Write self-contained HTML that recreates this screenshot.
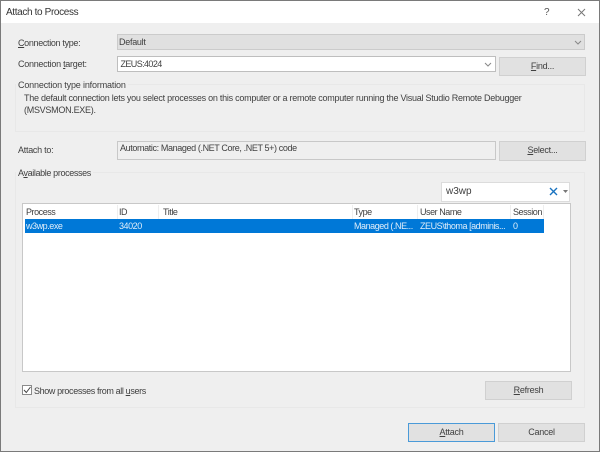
<!DOCTYPE html>
<html><head><meta charset="utf-8">
<style>
html,body{margin:0;padding:0;background:#efefef}
#w{position:relative;width:600px;height:452px;overflow:hidden;background:#efefef;font-family:"Liberation Sans",sans-serif;font-size:9px;letter-spacing:-.27px;color:#404040}
#w div{position:absolute;box-sizing:border-box}
.t{white-space:nowrap;line-height:12px;height:12px;filter:blur(.25px)}
.l{letter-spacing:-.45px}
.b{background:#e1e1e1;border:1px solid #d0d0d0;text-align:center;line-height:17px;white-space:nowrap;color:#404040}
u{text-underline-offset:1px}
</style></head><body>
<div id="w">
<div style="left:0;top:0;width:600px;height:23px;background:#fff"></div>
<div class="t" style="left:6px;top:7px;font-size:10px;letter-spacing:-.36px;color:#333">Attach to Process</div>
<div class="t" style="left:544px;top:7px;font-size:10px;color:#555">?</div>
<svg style="position:absolute;left:577px;top:8px" width="9" height="9"><path d="M1 1L8 8M8 1L1 8" stroke="#777" stroke-width="1" fill="none"/></svg>

<div class="t" style="left:18px;top:37px;letter-spacing:-.33px"><u>C</u>onnection type:</div>
<div style="left:117px;top:34px;width:468px;height:16px;background:#e0e0e0;border:1px solid #cbcbcb"></div>
<div class="t" style="left:119px;top:36px">Default</div>
<svg style="position:absolute;left:574px;top:40px" width="8" height="5"><path d="M1 1L4 4L7 1" stroke="#888" fill="none"/></svg>

<div class="t" style="left:18px;top:58px">Connection <u>t</u>arget:</div>
<div style="left:117px;top:56px;width:379px;height:16px;background:#fff;border:1px solid #bebebe"></div>
<div class="t" style="left:120.5px;top:58px;letter-spacing:-.6px">ZEUS:4024</div>
<svg style="position:absolute;left:484px;top:62px" width="8" height="5"><path d="M1 1L4 4L7 1" stroke="#888" fill="none"/></svg>
<div class="b" style="left:499px;top:57px;width:87px;height:19px"><u>F</u>ind...</div>

<div style="left:15px;top:84px;width:570px;height:48px;border:1px solid #e8e8e8"></div>
<div class="t" style="left:16px;top:79px;background:#efefef;padding:0 2px;letter-spacing:-.16px">Connection type information</div>
<div class="t" style="left:24px;top:92px;letter-spacing:-.255px">The default connection lets you select processes on this computer or a remote computer running the Visual Studio Remote Debugger</div>
<div class="t" style="left:24px;top:104px">(MSVSMON.EXE).</div>

<div class="t" style="left:18px;top:144px">Attach to:</div>
<div style="left:117px;top:141px;width:379px;height:19px;background:#efefef;border:1px solid #c8c8c8"></div>
<div class="t" style="left:120px;top:142px;letter-spacing:-.38px">Automatic: Managed (.NET Core, .NET 5+) code</div>
<div class="b" style="left:499px;top:141px;width:87px;height:20px"><u>S</u>elect...</div>

<div style="left:15px;top:172px;width:570px;height:236px;border:1px solid #e8e8e8"></div>
<div class="t" style="left:16px;top:167px;background:#efefef;padding:0 2px;letter-spacing:-.37px">A<u>v</u>ailable processes</div>

<div style="left:441px;top:182px;width:129px;height:20px;background:#fff;border:1px solid #dcdcdc"></div>
<div class="t" style="left:446px;top:186px;font-size:10px;letter-spacing:0">w3wp</div>
<svg style="position:absolute;left:549px;top:187px" width="9" height="9"><path d="M1 1L8 8M8 1L1 8" stroke="#1a73c0" stroke-width="1.4" fill="none"/></svg>
<svg style="position:absolute;left:563px;top:190px" width="6" height="4"><path d="M0 0H5L2.5 3Z" fill="#777"/></svg>

<div style="left:22px;top:203px;width:549px;height:169px;background:#fff;border:1px solid #c8c8c8"></div>
<div style="left:117px;top:205px;width:1px;height:14px;background:#eee"></div>
<div style="left:158px;top:205px;width:1px;height:14px;background:#eee"></div>
<div style="left:352px;top:205px;width:1px;height:14px;background:#eee"></div>
<div style="left:417px;top:205px;width:1px;height:14px;background:#eee"></div>
<div style="left:510px;top:205px;width:1px;height:14px;background:#eee"></div>
<div style="left:543px;top:205px;width:1px;height:14px;background:#eee"></div>
<div class="t l" style="left:26px;top:206px">Process</div>
<div class="t l" style="left:119px;top:206px">ID</div>
<div class="t l" style="left:163px;top:206px">Title</div>
<div class="t l" style="left:354px;top:206px">Type</div>
<div class="t l" style="left:420px;top:206px">User Name</div>
<div class="t l" style="left:513px;top:206px">Session</div>
<div style="left:25px;top:219px;width:519px;height:14px;background:#0078d7"></div>
<div class="t l" style="left:26px;top:220px;color:#e0eefa">w3wp.exe</div>
<div class="t l" style="left:119px;top:220px;color:#e0eefa">34020</div>
<div class="t l" style="left:354px;top:220px;color:#e0eefa">Managed (.NE...</div>
<div class="t l" style="left:420px;top:220px;color:#e0eefa">ZEUS\thoma [adminis...</div>
<div class="t l" style="left:513px;top:220px;color:#e0eefa">0</div>

<div style="left:22px;top:385px;width:10px;height:10px;background:#fff;border:1px solid #8a8a8a"></div>
<svg style="position:absolute;left:22px;top:385px" width="10" height="10"><path d="M2 5L4.3 7.5L8.5 2" stroke="#444" fill="none"/></svg>
<div class="t" style="left:34px;top:385px;letter-spacing:-.37px">Show processes from all <u>u</u>sers</div>
<div class="b" style="left:485px;top:381px;width:87px;height:19px"><u>R</u>efresh</div>
<div class="b" style="left:408px;top:423px;width:87px;height:19px;border-color:#4a9ad8"><u>A</u>ttach</div>
<div class="b" style="left:498px;top:423px;width:87px;height:19px">Cancel</div>

<div style="left:0;top:0;width:600px;height:452px;border:1px solid #7a7a7a"></div>
</div>
</body></html>
